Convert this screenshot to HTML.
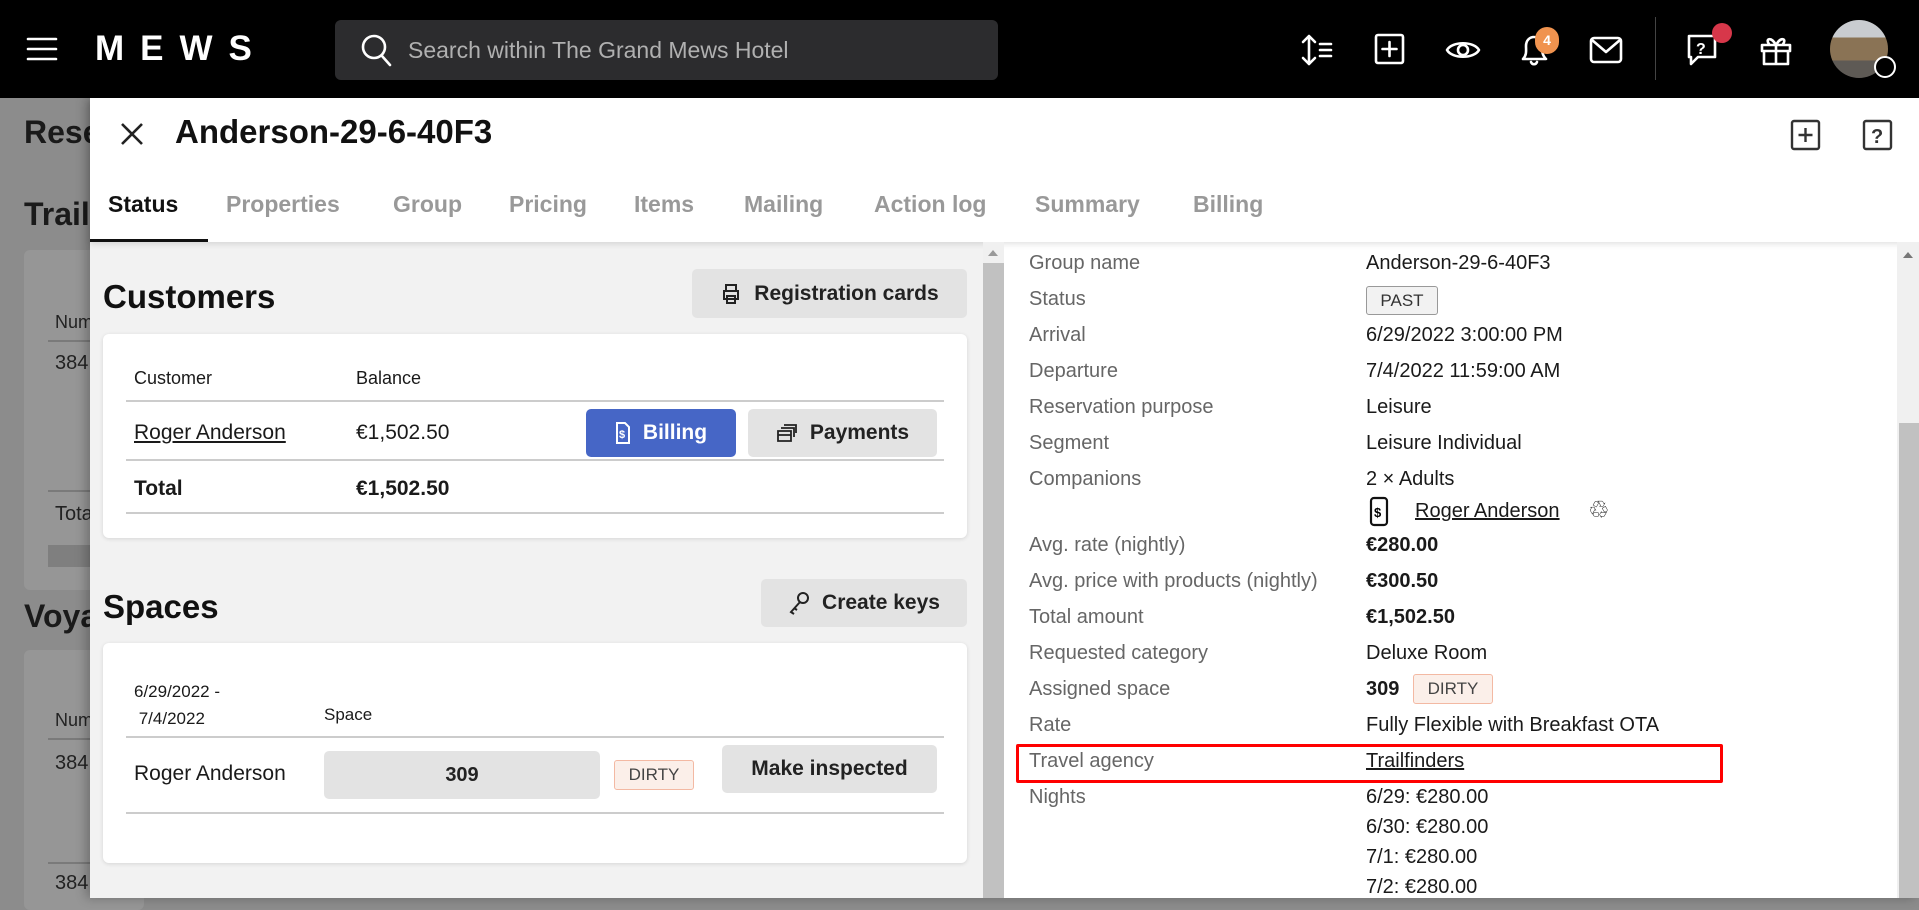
<!DOCTYPE html>
<html><head><meta charset="utf-8"><style>
*{box-sizing:border-box;margin:0;padding:0}
body{width:1919px;height:898px;overflow:hidden;font-family:"Liberation Sans",sans-serif;background:#8c8c8c;position:relative;color:#1a1a1a}
.a{position:absolute}
.hdr{left:0;top:0;width:1919px;height:98px;background:#000}
.search{left:335px;top:20px;width:663px;height:60px;background:#2c2c2e;border-radius:6px;color:#b0b0b0;font-size:23px;line-height:60px;padding-left:73px}
.ico{stroke:#fff;fill:none;stroke-width:2.6;stroke-linecap:round;stroke-linejoin:round}
.bg-t{font-weight:bold;font-size:32px;color:#1a1a1a}
.modal{left:90px;top:98px;width:1829px;height:800px;background:#f2f2f2;box-shadow:-4px 0 10px rgba(0,0,0,.25)}
.mh{left:90px;top:98px;width:1829px;height:144px;background:#fff;box-shadow:0 2px 6px rgba(0,0,0,.12)}
.tab{top:191px;font-size:23px;font-weight:bold;color:#999}
.btn{background:#e3e3e3;border-radius:5px;font-size:21px;font-weight:bold;color:#222;display:flex;align-items:center;justify-content:center;gap:12px}
.card{background:#fff;border-radius:6px;box-shadow:0 1px 4px rgba(0,0,0,.12)}
.line{height:2px;background:#ccc}
.t18{font-size:18px}
.t21{font-size:21px}
.lab{left:1029px;font-size:20px;color:#666}
.val{left:1366px;font-size:20px;color:#1a1a1a}
</style></head><body>
<div class="a bg-t" style="left:24px;top:114px">Reservations</div>
<div class="a bg-t" style="left:24px;top:196px">Trailfinders</div>
<div class="a" style="left:24px;top:250px;width:120px;height:340px;background:#969696;border-radius:6px"></div>
<div class="a" style="left:55px;top:312px;font-size:18px;color:#222">Number</div>
<div class="a" style="left:48px;top:340px;width:80px;height:2px;background:#7a7a7a"></div>
<div class="a" style="left:55px;top:352px;font-size:20px;color:#222">384</div>
<div class="a" style="left:48px;top:490px;width:80px;height:2px;background:#7a7a7a"></div>
<div class="a" style="left:55px;top:503px;font-size:20px;color:#222">Total</div>
<div class="a" style="left:48px;top:545px;width:80px;height:22px;background:#7f7f7f"></div>
<div class="a bg-t" style="left:24px;top:598px">Voyage</div>
<div class="a" style="left:24px;top:650px;width:120px;height:260px;background:#969696;border-radius:6px"></div>
<div class="a" style="left:55px;top:710px;font-size:18px;color:#222">Number</div>
<div class="a" style="left:48px;top:738px;width:80px;height:2px;background:#7a7a7a"></div>
<div class="a" style="left:55px;top:752px;font-size:20px;color:#222">384</div>
<div class="a" style="left:48px;top:862px;width:80px;height:2px;background:#7a7a7a"></div>
<div class="a" style="left:55px;top:872px;font-size:20px;color:#222">384</div>

<div class="a hdr"></div>
<svg class="a" style="left:26px;top:36px" width="32" height="26"><path class="ico" d="M2 3H30M2 13H30M2 23H30"/></svg>
<div class="a" style="left:95px;top:29px;color:#fff;font-size:35px;font-weight:bold;letter-spacing:16px;line-height:40px">MEWS</div>
<div class="a search">Search within The Grand Mews Hotel</div>
<svg class="a" style="left:360px;top:33px" width="34" height="36"><circle class="ico" cx="14" cy="14" r="11" stroke="#b0b0b0"/><path class="ico" d="M22 23L30 32" stroke="#b0b0b0"/></svg>
<svg class="a" style="left:1300px;top:33px" width="34" height="34"><path class="ico" d="M9 3V31M3 9L9 3L15 9M3 25L9 31L15 25M20 11H31M20 17H31M20 23H31"/></svg>
<svg class="a" style="left:1374px;top:33px" width="32" height="32"><rect class="ico" x="2" y="2" width="27" height="28" rx="2"/><path class="ico" d="M15.5 9V23M8.5 16H22.5"/></svg>
<svg class="a" style="left:1445px;top:36px" width="36" height="28"><path class="ico" d="M2 14C7 5 29 5 34 14C29 23 7 23 2 14Z"/><circle class="ico" cx="18" cy="14" r="5"/></svg>
<svg class="a" style="left:1518px;top:33px" width="34" height="34"><path class="ico" d="M5 26C9 22 8 17 8 13C8 7 12 4 16 4C21 4 24 8 24 13C24 18 24 22 28 26ZM13 29C14 32 18 32 19 29"/></svg>
<div class="a" style="left:1535px;top:27px;width:24px;height:27px;border-radius:12px;background:#f0934f;color:#fff;font-size:14px;font-weight:bold;text-align:center;line-height:27px">4</div>
<svg class="a" style="left:1589px;top:36px" width="34" height="28"><rect class="ico" x="2" y="2" width="30" height="24" rx="3"/><path class="ico" d="M3 4L17 16L31 4"/></svg>
<div class="a" style="left:1655px;top:17px;width:1px;height:63px;background:#444"></div>
<svg class="a" style="left:1685px;top:33px" width="36" height="34"><path class="ico" d="M4 3H30V24H13L6 31V24H4Z"/><text x="11" y="21" fill="#fff" font-size="16" font-weight="bold" font-family="Liberation Sans">?</text></svg>
<div class="a" style="left:1712px;top:23px;width:20px;height:20px;border-radius:50%;background:#d7374a"></div>
<svg class="a" style="left:1759px;top:33px" width="34" height="34"><path class="ico" d="M3 12H31V18H3ZM5 18V31H29V18M17 12V31M17 12C12 3 6 6 10 11M17 12C22 3 28 6 24 11"/></svg>
<div class="a" style="left:1830px;top:20px;width:58px;height:58px;border-radius:50%;background:linear-gradient(#c9ccd0 0 30%,#8a7355 30% 70%,#5e5a55 70%)"></div>
<div class="a" style="left:1874px;top:56px;width:22px;height:22px;border-radius:50%;background:#000;border:2.5px solid #fff"></div>

<div class="a modal"></div>
<div class="a" style="left:1004px;top:242px;width:915px;height:656px;background:#fff"></div>
<div class="a mh"></div>
<svg class="a" style="left:119px;top:121px" width="26" height="26"><path d="M3 3L23 23M23 3L3 23" stroke="#222" stroke-width="2.6"/></svg>
<div class="a" style="left:175px;top:113px;font-size:33px;font-weight:bold;color:#111">Anderson-29-6-40F3</div>
<svg class="a" style="left:1790px;top:119px" width="32" height="32"><rect x="2" y="2" width="27" height="28" rx="2" fill="none" stroke="#333" stroke-width="2.4"/><path d="M15.5 9V23M8.5 16H22.5" stroke="#333" stroke-width="2.4"/></svg>
<svg class="a" style="left:1862px;top:119px" width="32" height="32"><rect x="2" y="2" width="27" height="28" rx="2" fill="none" stroke="#333" stroke-width="2.4"/><text x="9" y="24" fill="#333" font-size="20" font-weight="bold" font-family="Liberation Sans">?</text></svg>
<div class="a tab" style="left:108px;color:#111">Status</div>
<div class="a" style="left:90px;top:239px;width:118px;height:3px;background:#111"></div>
<div class="a tab" style="left:226px">Properties</div>
<div class="a tab" style="left:393px">Group</div>
<div class="a tab" style="left:509px">Pricing</div>
<div class="a tab" style="left:634px">Items</div>
<div class="a tab" style="left:744px">Mailing</div>
<div class="a tab" style="left:874px">Action log</div>
<div class="a tab" style="left:1035px">Summary</div>
<div class="a tab" style="left:1193px">Billing</div>

<div class="a" style="left:983px;top:242px;width:21px;height:656px;background:#f0f0f0"></div>
<div class="a" style="left:983px;top:263px;width:21px;height:635px;background:#c1c1c1"></div>
<div class="a" style="left:988px;top:250px;width:0;height:0;border-left:5px solid transparent;border-right:5px solid transparent;border-bottom:6px solid #999"></div>

<div class="a" style="left:103px;top:278px;font-size:33px;font-weight:bold;color:#111">Customers</div>
<div class="a btn" style="left:692px;top:269px;width:275px;height:49px"><svg width="22" height="22"><path d="M6 8V2H16V8M4 8H18V16H4ZM7 13H15V20H7Z" fill="none" stroke="#222" stroke-width="2"/></svg>Registration cards</div>
<div class="a card" style="left:103px;top:334px;width:864px;height:204px"></div>
<div class="a t18" style="left:134px;top:368px">Customer</div>
<div class="a t18" style="left:356px;top:368px">Balance</div>
<div class="a line" style="left:126px;top:400px;width:818px"></div>
<div class="a t21" style="left:134px;top:421px;text-decoration:underline">Roger Anderson</div>
<div class="a t21" style="left:356px;top:421px">€1,502.50</div>
<div class="a btn" style="left:586px;top:409px;width:150px;height:48px;background:#4666c6;color:#fff"><svg width="16" height="24"><path d="M2 2H10L14 6V22H2Z" fill="none" stroke="#fff" stroke-width="2"/><text x="4" y="17" fill="#fff" font-size="11" font-weight="bold" font-family="Liberation Sans">$</text></svg>Billing</div>
<div class="a btn" style="left:748px;top:409px;width:189px;height:48px"><svg width="22" height="20"><path d="M2 8H15V18H2ZM2 12H15M5 5H18V14M8 2H20V10" fill="none" stroke="#222" stroke-width="1.8"/></svg>Payments</div>
<div class="a line" style="left:126px;top:459px;width:818px"></div>
<div class="a t21" style="left:134px;top:477px;font-weight:bold">Total</div>
<div class="a t21" style="left:356px;top:477px;font-weight:bold">€1,502.50</div>
<div class="a line" style="left:126px;top:512px;width:818px"></div>

<div class="a" style="left:103px;top:588px;font-size:33px;font-weight:bold;color:#111">Spaces</div>
<div class="a btn" style="left:761px;top:579px;width:206px;height:48px"><svg width="22" height="24"><circle cx="15" cy="7" r="5" fill="none" stroke="#222" stroke-width="2"/><path d="M12 11L3 21L6 23M6 17L9 19" fill="none" stroke="#222" stroke-width="2"/></svg>Create keys</div>
<div class="a card" style="left:103px;top:643px;width:864px;height:220px"></div>
<div class="a" style="left:134px;top:678px;font-size:17px;line-height:27px">6/29/2022 -<br>&nbsp;7/4/2022</div>
<div class="a" style="left:324px;top:705px;font-size:17px">Space</div>
<div class="a line" style="left:126px;top:736px;width:818px"></div>
<div class="a t21" style="left:134px;top:762px">Roger Anderson</div>
<div class="a btn" style="left:324px;top:751px;width:276px;height:48px;font-size:20px">309</div>
<div class="a" style="left:614px;top:760px;width:80px;height:30px;background:#fbefe9;border:1px solid #f3b9a3;border-radius:3px;font-size:17px;color:#444;text-align:center;line-height:28px">DIRTY</div>
<div class="a btn" style="left:722px;top:745px;width:215px;height:48px">Make inspected</div>
<div class="a line" style="left:126px;top:812px;width:818px"></div>

<div class="a lab" style="top:252px">Group name</div><div class="a val" style="top:252px">Anderson-29-6-40F3</div>
<div class="a lab" style="top:288px">Status</div><div class="a" style="left:1366px;top:286px;width:72px;height:29px;background:#f2f2f2;border:1px solid #999;border-radius:3px;font-size:17px;text-align:center;line-height:27px;color:#333">PAST</div>
<div class="a lab" style="top:324px">Arrival</div><div class="a val" style="top:324px">6/29/2022 3:00:00 PM</div>
<div class="a lab" style="top:360px">Departure</div><div class="a val" style="top:360px">7/4/2022 11:59:00 AM</div>
<div class="a lab" style="top:396px">Reservation purpose</div><div class="a val" style="top:396px">Leisure</div>
<div class="a lab" style="top:432px">Segment</div><div class="a val" style="top:432px">Leisure Individual</div>
<div class="a lab" style="top:468px">Companions</div><div class="a val" style="top:468px">2 × Adults</div>
<svg class="a" style="left:1369px;top:496px" width="20" height="32"><rect x="2" y="2" width="16" height="27" rx="3" fill="none" stroke="#111" stroke-width="2.2"/><text x="5" y="21" font-size="13" font-weight="bold" font-family="Liberation Sans">$</text></svg>
<div class="a val" style="left:1415px;top:500px;text-decoration:underline">Roger Anderson</div>
<div class="a" style="left:1588px;top:496px;font-size:24px;color:#222;font-family:'DejaVu Sans',sans-serif">♲</div>
<div class="a lab" style="top:534px">Avg. rate (nightly)</div><div class="a val" style="top:534px;font-weight:bold">€280.00</div>
<div class="a lab" style="top:570px">Avg. price with products (nightly)</div><div class="a val" style="top:570px;font-weight:bold">€300.50</div>
<div class="a lab" style="top:606px">Total amount</div><div class="a val" style="top:606px;font-weight:bold">€1,502.50</div>
<div class="a lab" style="top:642px">Requested category</div><div class="a val" style="top:642px">Deluxe Room</div>
<div class="a lab" style="top:678px">Assigned space</div><div class="a val" style="top:678px;font-weight:bold">309</div>
<div class="a" style="left:1413px;top:674px;width:80px;height:30px;background:#fbefe9;border:1px solid #f3b9a3;border-radius:3px;font-size:17px;color:#444;text-align:center;line-height:28px">DIRTY</div>
<div class="a lab" style="top:714px">Rate</div><div class="a val" style="top:714px">Fully Flexible with Breakfast OTA</div>
<div class="a lab" style="top:750px">Travel agency</div><div class="a val" style="top:750px;text-decoration:underline">Trailfinders</div>
<div class="a" style="left:1016px;top:744px;width:707px;height:39px;border:3.5px solid #f00;border-radius:2px"></div>
<div class="a lab" style="top:786px">Nights</div>
<div class="a val" style="top:786px">6/29: €280.00</div>
<div class="a val" style="top:816px">6/30: €280.00</div>
<div class="a val" style="top:846px">7/1: €280.00</div>
<div class="a val" style="top:876px">7/2: €280.00</div>

<div class="a" style="left:1897px;top:242px;width:22px;height:656px;background:#f0f0f0"></div>
<div class="a" style="left:1899px;top:423px;width:20px;height:475px;background:#c1c1c1"></div>
<div class="a" style="left:1903px;top:252px;width:0;height:0;border-left:5px solid transparent;border-right:5px solid transparent;border-bottom:6px solid #777"></div>
</body></html>
